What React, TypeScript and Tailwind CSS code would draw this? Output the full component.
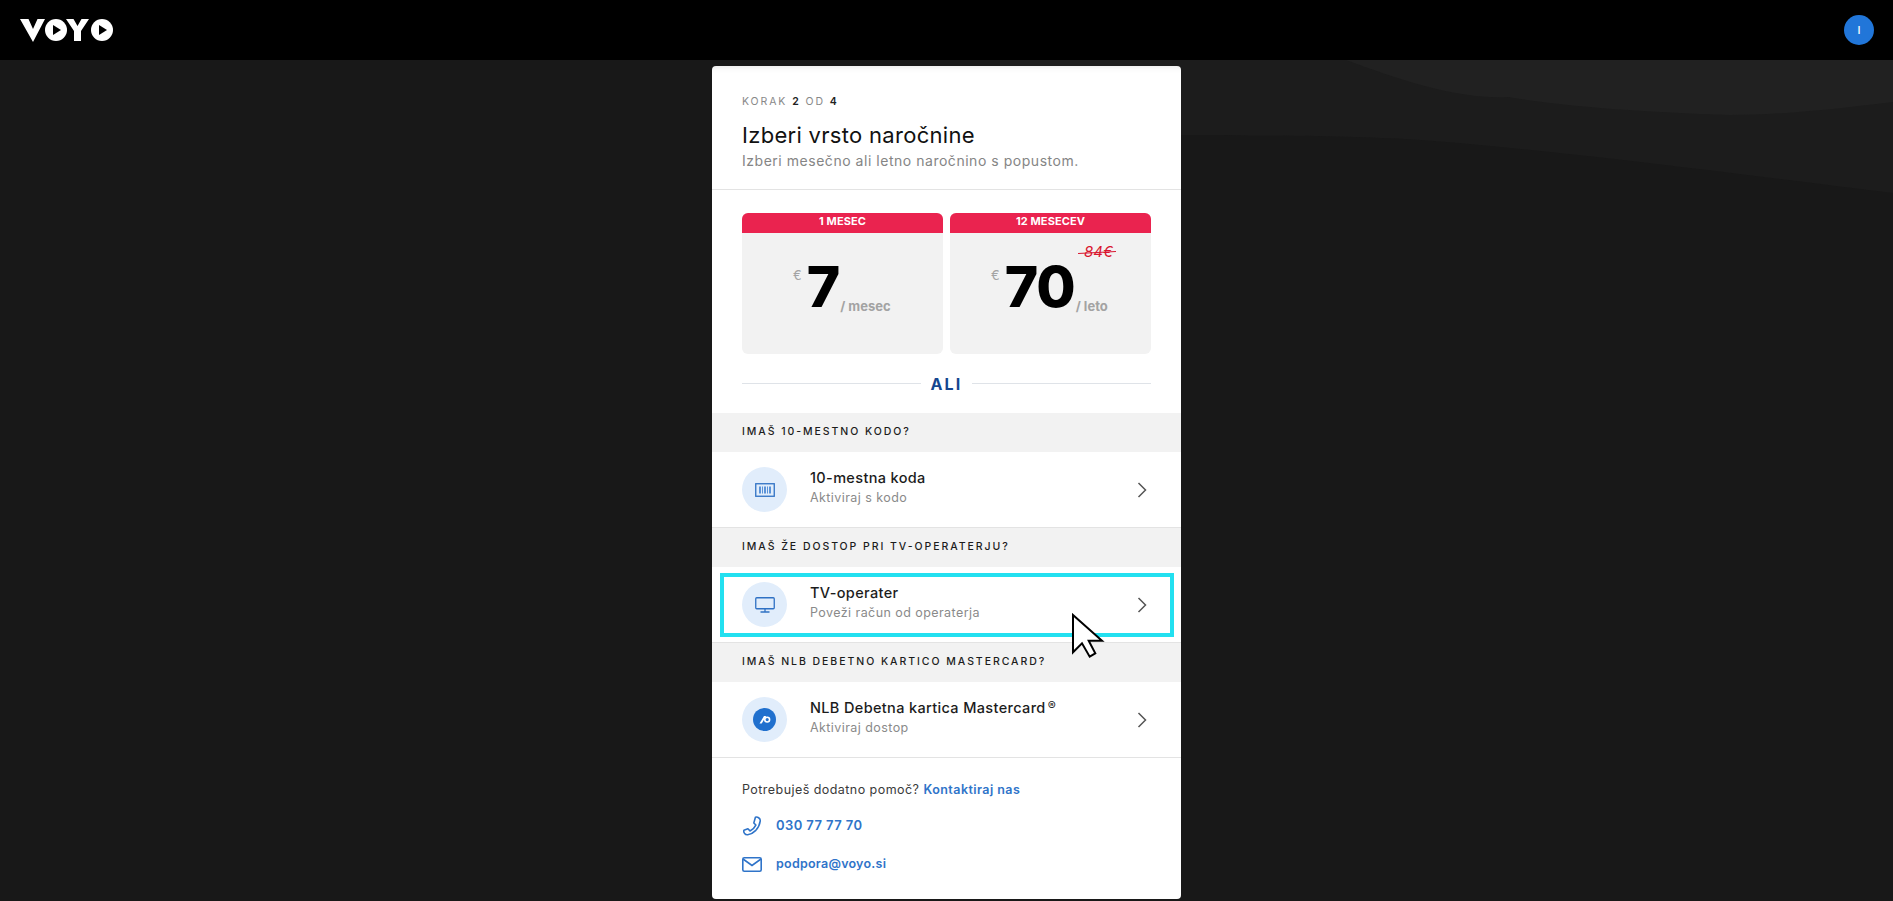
import React from "react";

const font = { fontFamily: '"Inter", "Liberation Sans", sans-serif' };

function Logo() {
  return (
    <svg width="94" height="24" viewBox="0 0 94 24" className="block">
      <path d="M0 1h8.5L13 11l4.5-10H25L13 24z" fill="#fff" />
      <circle cx="36" cy="12" r="11" fill="#fff" />
      <path d="M33 7l8 5-8 5z" fill="#000" />
      <path d="M46 1h7.5l4 7 4-7H69l-8 12v10h-7V13z" fill="#fff" />
      <circle cx="82" cy="12" r="11" fill="#fff" />
      <path d="M79 7l8 5-8 5z" fill="#000" />
    </svg>
  );
}

function Chevron() {
  return (
    <svg width="12" height="18" viewBox="0 0 12 18" fill="none" stroke="#555" strokeWidth="1.5">
      <path d="M2.5 2l7 7-7 7" />
    </svg>
  );
}

function IconCircle({ children }: { children: React.ReactNode }) {
  return (
    <div className="w-[45px] h-[45px] rounded-full bg-[#e1edfb] flex items-center justify-center shrink-0">
      {children}
    </div>
  );
}

function Row({
  icon,
  title,
  sub,
  focused,
}: {
  icon: React.ReactNode;
  title: React.ReactNode;
  sub: string;
  focused?: boolean;
}) {
  return (
    <div className="relative h-[76px] bg-white flex items-center pl-[30px] pr-[33px] border-b border-[#e3e3e3]">
      {focused && (
        <div className="absolute left-[8px] right-[7px] top-[6px] bottom-[5px] border-[4px] border-[#22e0f0]" />
      )}
      <IconCircle>{icon}</IconCircle>
      <div className="ml-[23px] flex-1 min-w-0 pb-[4px]">
        <div className="text-[14.5px] leading-[18px] font-medium text-[#1c1c1c] tracking-[0.35px]">{title}</div>
        <div className="text-[12.5px] leading-[16px] mt-[3px] text-[#8a8a8a] tracking-[0.43px]">{sub}</div>
      </div>
      <Chevron />
    </div>
  );
}

function Section({ children }: { children: React.ReactNode }) {
  return (
    <div className="h-[39px] bg-[#f2f2f2] flex items-center pl-[30px] pb-[2px] text-[10.5px] font-medium tracking-[1.95px] text-[#1c1c1c]">
      {children}
    </div>
  );
}

function Price({
  label,
  amount,
  unit,
  old,
  offset,
  unitGap,
}: {
  label: string;
  amount: string;
  unit: string;
  old?: string;
  offset: string;
  unitGap: string;
}) {
  return (
    <div className="w-[201px] h-[141px] rounded-[6px] overflow-hidden bg-[#f2f2f2] flex flex-col">
      <div className="h-[20px] bg-[#ea234f] text-white text-[11px] leading-[17px] font-bold text-center tracking-[0.1px]">
        {label}
      </div>
      <div className="relative flex-1">
        {old && (
          <div className="absolute right-[38px] top-[10px] text-[15px] leading-[18px] text-[#d9162f] italic">
            {old}
            <div className="absolute left-[-6px] right-[-3px] top-[9px] h-px bg-[#d9162f] -rotate-3" />
          </div>
        )}
        <div className={`flex items-start ${offset} pt-[24px]`}>
          <span className="text-[13px] leading-[22px] mt-[7px] text-[#a3a3a3]">€</span>
          <span className="text-[57px] leading-[57px] mt-[1px] font-extrabold text-black ml-[5px] tracking-[-1px]">{amount}</span>
          <span className={`text-[13px] leading-[16px] mt-[41px] ${unitGap} font-bold text-[#a3a3a3]`}>{unit}</span>
        </div>
      </div>
    </div>
  );
}

function Cursor() {
  return (
    <svg className="absolute left-[359px] top-[547px]" width="34" height="46" viewBox="0 0 34 46">
      <path
        d="M2 2V39.300L11 30.300L18.700 43.700L24.300 40.300L17.700 27.700H31Z"
        fill="#fff"
        stroke="#000"
        strokeWidth="2"
      />
    </svg>
  );
}

export default function App() {
  return (
    <div className="relative h-screen overflow-hidden bg-[#181818] flex flex-col" style={font}>
      <svg className="absolute left-0 top-[60px]" width="1893" height="200" viewBox="0 0 1893 200">
        <path d="M1000 0H1893V133C1730 113 1553 90 1421 80C1340 75 1260 75 1000 75Z" fill="#1c1c1c" />
        <path d="M1346 0C1400 20 1460 40 1509 37C1560 46 1640 52 1730 55C1790 55 1850 47 1893 42V0Z" fill="#212121" />
      </svg>

      <header className="relative h-[60px] shrink-0 bg-black flex items-center justify-between pl-[20px] pr-[19px]">
        <Logo />
        <div className="w-[30px] h-[30px] rounded-full bg-[#2176d9] flex items-center justify-center text-white text-[11px] font-medium">
          I
        </div>
      </header>

      <main className="relative flex-1 flex justify-center pt-[6px]">
        <div className="relative w-[469px] h-[833px] bg-white rounded-[4px] overflow-hidden flex flex-col">
          <div className="h-[124px] pl-[30px] pt-[29px] border-b border-[#e3e3e3] shrink-0 shadow-[inset_0_7px_6px_-6px_rgba(0,0,0,0.1)]">
            <div className="text-[10.5px] leading-[13px] tracking-[1.9px] text-[#888]">
              KORAK <span className="font-semibold text-[#222]">2</span> OD{" "}
              <span className="font-semibold text-[#222]">4</span>
            </div>
            <div className="mt-[13px] text-[22px] leading-[28px] text-[#111] tracking-[0.3px]">
              Izberi vrsto naročnine
            </div>
            <div className="mt-[3px] text-[14px] leading-[18px] text-[#858585] tracking-[0.53px]">
              Izberi mesečno ali letno naročnino s popustom.
            </div>
          </div>

          <div className="flex gap-[7px] px-[30px] pt-[23px] shrink-0">
            <Price label="1 MESEC" amount="7" unit="/ mesec" offset="pl-[51px]" unitGap="ml-[1px]" />
            <Price label="12 MESECEV" amount="70" unit="/ leto" old="84€" offset="pl-[41px]" unitGap="ml-[1px]" />
          </div>

          <div className="flex items-center gap-[9px] px-[30px] h-[59px] shrink-0">
            <div className="flex-1 h-px bg-[#dfe3e8]" />
            <span className="text-[16px] font-bold tracking-[2.2px] text-[#15468f] mt-[1px]">ALI</span>
            <div className="flex-1 h-px bg-[#dfe3e8]" />
          </div>

          <Section>IMAŠ 10-MESTNO KODO?</Section>
          <Row
            title="10-mestna koda"
            sub="Aktiviraj s kodo"
            icon={
              <svg width="20" height="14" viewBox="0 0 20 14" fill="none">
                <rect x="0.75" y="0.75" width="18.5" height="12.5" stroke="#2f71c4" strokeWidth="1.3" />
                <path d="M4 3.5h2v7H4zM7 3.5h1v7H7zM9 3.5h2v7H9zM12 3.5h1v7h-1zM14 3.5h2v7h-2z" fill="#5b93d8" />
              </svg>
            }
          />
          <Section>IMAŠ ŽE DOSTOP PRI TV-OPERATERJU?</Section>
          <Row
            focused
            title="TV-operater"
            sub="Poveži račun od operaterja"
            icon={
              <svg width="20" height="16" viewBox="0 0 20 16" fill="none" stroke="#2f71c4" strokeWidth="1.3">
                <rect x="0.75" y="0.75" width="18.5" height="11" rx="1" />
                <path d="M10 12v3M5.5 15h9" />
              </svg>
            }
          />
          <Section>IMAŠ NLB DEBETNO KARTICO MASTERCARD?</Section>
          <Row
            title={
              <>
                NLB Debetna kartica Mastercard<sup className="text-[12px] font-normal ml-[2px] top-[-3px]">®</sup>
              </>
            }
            sub="Aktiviraj dostop"
            icon={
              <svg width="23" height="23" viewBox="0 0 23 23">
                <circle cx="11.5" cy="11.5" r="11.5" fill="#2070ce" />
                <path d="M6.500 15.500L11 8h2.200L8.700 15.500z" fill="#fff" />
                <circle cx="14.200" cy="11.600" r="2.400" fill="none" stroke="#fff" strokeWidth="1.600" />
              </svg>
            }
          />

          <div className="pl-[30px] pt-[24px] flex flex-col">
            <div className="text-[12.5px] leading-[16px] text-[#3a3a3a] tracking-[0.45px]">
              Potrebuješ dodatno pomoč? <span className="font-semibold text-[#2f74c9]">Kontaktiraj nas</span>
            </div>
            <div className="flex items-center mt-[18px] h-[20px]">
              <svg width="21" height="20" viewBox="0 0 24 24" fill="none" stroke="#2f74c9" strokeWidth="1.9" strokeLinejoin="round">
                <path d="M15.500 1.500c1.200-.500 2.500-.300 3.800.600 1.500 1 2.200 2.300 2 3.800-.600 4.500-2.500 8.300-5.300 11.300-3 3-6.700 4.900-9.700 5.300-1.700.200-3-.500-4-1.900-.800-1.200-1-2.400-.600-3.500l4.800-1.800 2.500 2.600c2.800-1.300 5.700-4.200 7-7l-2.400-2.600z" />
              </svg>
              <span className="ml-[13px] text-[13px] font-semibold text-[#2f74c9] tracking-[0.4px]">030 77 77 70</span>
            </div>
            <div className="flex items-center mt-[18px] h-[20px]">
              <svg width="20" height="15" viewBox="0 0 20 15" fill="none" stroke="#2f74c9" strokeWidth="1.6">
                <rect x="0.8" y="0.8" width="18.4" height="13.4" rx="1.5" />
                <path d="M1 2l9 6.500L19 2" />
              </svg>
              <span className="ml-[14px] text-[12.5px] font-semibold text-[#2f74c9] tracking-[0.25px]">podpora@voyo.si</span>
            </div>
          </div>
          <Cursor />
        </div>
      </main>
    </div>
  );
}
